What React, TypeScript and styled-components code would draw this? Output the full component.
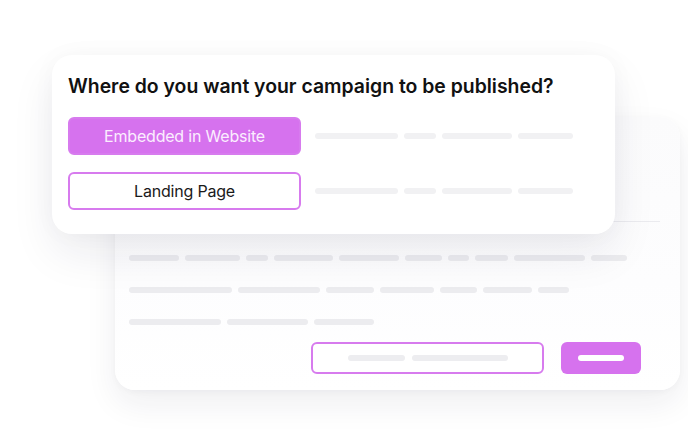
import React from "react";
import styled, { createGlobalStyle } from "styled-components";

const GlobalStyle = createGlobalStyle`
  html, body {
    margin: 0;
    padding: 0;
    background: #ffffff;
  }
  body {
    font-family: Inter, "Noto Sans", sans-serif;
    color: #111111;
  }
`;

const Scene = styled.div`
  position: relative;
  width: 688px;
  height: 444px;
  overflow: hidden;
  background: #ffffff;
`;

const BackCard = styled.div`
  margin: 117px 0 0 115px;
  width: 565px;
  height: 273px;
  box-sizing: border-box;
  border-radius: 20px;
  background: linear-gradient(180deg, #fbfbfc 0%, #fdfdfe 60%, #ffffff 100%);
  box-shadow: 0 14px 32px rgba(30, 30, 60, 0.07), 0 2px 6px rgba(30, 30, 60, 0.03);
  display: flex;
  flex-direction: column;
  padding: 0 0 0 14px;
`;

const Divider = styled.div`
  margin-top: 104px;
  width: 531px;
  height: 1px;
  background: #ebebef;
`;

const Lines = styled.div`
  display: flex;
  flex-direction: column;
  gap: 26px;
  margin-top: 33px;
`;

const BarRow = styled.div`
  display: flex;
  gap: 6px;
`;

const Bar = styled.div<{ $w: number; $tone?: string }>`
  width: ${(p) => p.$w}px;
  height: 6px;
  border-radius: 3px;
  background: ${(p) => p.$tone ?? "#ececef"};
`;

const Actions = styled.div`
  display: flex;
  justify-content: flex-end;
  gap: 17px;
  margin-top: 17px;
  padding-right: 39px;
`;

const GhostAction = styled.div`
  width: 233px;
  height: 32px;
  box-sizing: border-box;
  border: 2px solid #d77bee;
  border-radius: 6px;
  background: #ffffff;
  display: flex;
  align-items: center;
  justify-content: center;
  gap: 7px;
`;

const SolidAction = styled.div`
  width: 80px;
  height: 32px;
  border-radius: 6px;
  background: #d672ee;
  display: flex;
  align-items: center;
  justify-content: center;
`;

const FrontCard = styled.div`
  position: absolute;
  left: 52px;
  top: 55px;
  width: 563px;
  height: 179px;
  box-sizing: border-box;
  padding: 18px 16px 0;
  border-radius: 20px;
  background: #ffffff;
  box-shadow: 0 20px 44px rgba(30, 30, 60, 0.08), 0 0 24px rgba(30, 30, 60, 0.03);
`;

const Title = styled.h2`
  margin: 0;
  font-family: Inter, "Noto Sans", sans-serif;
  font-size: 19.4px;
  font-weight: 600;
  line-height: 26px;
  letter-spacing: 0;
  color: #111111;
`;

const Options = styled.div`
  display: flex;
  flex-direction: column;
  gap: 17px;
  margin-top: 18px;
`;

const OptionRow = styled.div`
  display: flex;
  align-items: center;
  gap: 14px;
`;

const OptionButton = styled.div<{ $active?: boolean }>`
  width: 233px;
  height: 38px;
  box-sizing: border-box;
  border-radius: 6px;
  border: 2px solid #d77bee;
  background: ${(p) => (p.$active ? "#d672ee" : "#ffffff")};
  color: ${(p) => (p.$active ? "#fbeefe" : "#1a1a1a")};
  font-family: Inter, "Noto Sans", sans-serif;
  font-size: 16px;
  font-weight: 400;
  letter-spacing: -0.2px;
  display: flex;
  align-items: center;
  justify-content: center;
`;

const backRows = [
  [50, 55, 22, 59, 60, 37, 21, 33, 71, 36],
  [103, 82, 48, 54, 37, 49, 31],
  [92, 81, 60],
];

const optionBars = [83, 32, 70, 55];

export default function App() {
  return (
    <Scene>
      <GlobalStyle />
      <BackCard>
        <Divider />
        <Lines>
          {backRows.map((row, i) => (
            <BarRow key={i}>
              {row.map((w, j) => (
                <Bar key={j} $w={w} />
              ))}
            </BarRow>
          ))}
        </Lines>
        <Actions>
          <GhostAction>
            <Bar $w={57} $tone="#ededf0" />
            <Bar $w={96} $tone="#ededf0" />
          </GhostAction>
          <SolidAction>
            <Bar $w={46} $tone="#ffffff" />
          </SolidAction>
        </Actions>
      </BackCard>

      <FrontCard>
        <Title>Where do you want your campaign to be published?</Title>
        <Options>
          <OptionRow>
            <OptionButton $active>Embedded in Website</OptionButton>
            <BarRow>
              {optionBars.map((w, j) => (
                <Bar key={j} $w={w} $tone="#f1f1f3" />
              ))}
            </BarRow>
          </OptionRow>
          <OptionRow>
            <OptionButton>Landing Page</OptionButton>
            <BarRow>
              {optionBars.map((w, j) => (
                <Bar key={j} $w={w} $tone="#f1f1f3" />
              ))}
            </BarRow>
          </OptionRow>
        </Options>
      </FrontCard>
    </Scene>
  );
}
